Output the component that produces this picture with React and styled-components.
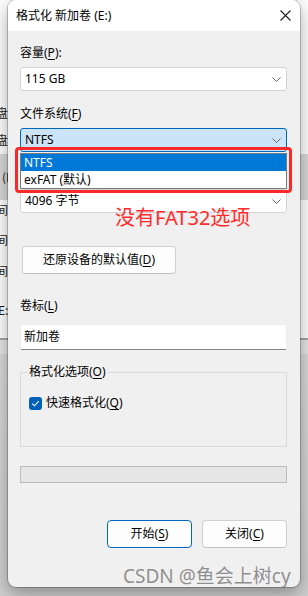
import React from "react";
import styled, { createGlobalStyle } from "styled-components";

const Global = createGlobalStyle`
  * { box-sizing: border-box; }
  html, body { margin: 0; padding: 0; width: 308px; height: 596px; overflow: hidden; background: #ffffff; }
  body { font-family: "Noto Sans", "Noto Sans CJK SC", sans-serif; font-size: 12px; color: #000; }
`;

const FONT = `"Noto Sans", "Noto Sans CJK SC", sans-serif`;

const Desktop = styled.div`
  position: relative;
  width: 308px;
  height: 596px;
  overflow: hidden;
  background: #ffffff;
`;

/* ---------- window behind the dialog ---------- */
const BackWindow = styled.div`
  position: absolute;
  inset: 0;
  display: flex;
  flex-direction: column;
  font-family: "Noto Sans CJK SC", sans-serif;
  font-size: 12px;
  color: #1a1a1a;
`;

const BackRow = styled.div`
  height: ${(p) => p.$h}px;
  flex: none;
  display: flex;
  align-items: center;
  background: ${(p) => p.$bg || "#ffffff"};
  border-top: ${(p) => (p.$line ? `2px solid ${p.$line}` : "none")};
`;

const BackText = styled.span`
  margin-left: ${(p) => p.$offset}px;
  white-space: nowrap;
  line-height: 14px;
`;

const BackFill = styled.div`
  flex: 1;
  background: linear-gradient(#d9d9d9, #cfcfcf);
`;

/* ---------- dialog ---------- */
const Dialog = styled.div`
  position: absolute;
  left: 8px;
  top: 0;
  width: 292px;
  height: 587px;
  background: #f0f0f0;
  border-radius: 8px;
  box-shadow: 0 0 0 1px rgba(0, 0, 0, 0.22), 0 6px 18px rgba(0, 0, 0, 0.35);
  display: flex;
  flex-direction: column;
  overflow: hidden;
  font-family: ${FONT};
`;

const TitleBar = styled.div`
  height: 31px;
  flex: none;
  background: #ffffff;
  display: flex;
  align-items: center;
  justify-content: space-between;
  padding-left: 8px;
`;

const Title = styled.span`
  font-size: 12px;
  line-height: 16px;
  color: #000;
`;

const CloseButton = styled.div`
  width: 30px;
  height: 31px;
  display: flex;
  align-items: center;
  justify-content: center;
`;

const Body = styled.div`
  display: flex;
  flex-direction: column;
  padding: 14px 13px 0 12px;
`;

const Label = styled.div`
  font-size: 12px;
  line-height: 16px;
  height: 16px;
  margin-top: ${(p) => p.$mt || 0}px;
  margin-bottom: ${(p) => (p.$mb == null ? 6 : p.$mb)}px;
  white-space: nowrap;
`;

const U = styled.span`
  text-decoration: underline;
  text-underline-offset: 2px;
`;

const Combo = styled.div`
  height: 24px;
  background: ${(p) => (p.$active ? "#cce4f7" : "#ffffff")};
  border: 1px solid ${(p) => (p.$active ? "#0067c0" : "#d3d3d3")};
  border-radius: 3px;
  display: flex;
  align-items: center;
  justify-content: space-between;
  padding: 0 5px 0 4px;
  font-size: 12px;
  line-height: 16px;
`;

const Chevron = () => (
  <svg width="9" height="5" viewBox="0 0 9 5">
    <polyline points="0.5,0.5 4.5,4.5 8.5,0.5" fill="none" stroke="#666" strokeWidth="1" />
  </svg>
);

const Button = styled.div`
  width: ${(p) => p.$w}px;
  height: 28px;
  flex: none;
  margin-left: ${(p) => p.$ml || 0}px;
  margin-top: ${(p) => p.$mt || 0}px;
  background: #fdfdfd;
  border: 1px solid ${(p) => (p.$primary ? "#0067c0" : "#d0d0d0")};
  border-bottom-color: ${(p) => (p.$primary ? "#0067c0" : "#c2c2c2")};
  border-radius: 4px;
  display: flex;
  align-items: center;
  justify-content: center;
  font-size: 12px;
  line-height: 16px;
  white-space: nowrap;
`;

const TextBox = styled.div`
  height: 26px;
  background: #ffffff;
  border: 1px solid #ececec;
  border-bottom: 1px solid #858585;
  border-radius: 2px;
  display: flex;
  align-items: center;
  padding-left: 3px;
  font-size: 12px;
  line-height: 16px;
`;

const Group = styled.fieldset`
  margin: 14px 0 0 0;
  padding: 15px 8px 35px 8px;
  border: 1px solid #dadada;
  min-width: 0;
`;

const Legend = styled.legend`
  margin-left: -2px;
  padding: 0 2px;
  font-size: 12px;
  line-height: 16px;
`;

const CheckRow = styled.div`
  display: flex;
  align-items: center;
  gap: 4px;
  height: 16px;
  font-size: 12px;
  line-height: 16px;
`;

const CheckBox = styled.div`
  width: 13px;
  height: 13px;
  border-radius: 3px;
  background: #005fb8;
  display: flex;
  align-items: center;
  justify-content: center;
`;

const Progress = styled.div`
  margin-top: 19px;
  height: 17px;
  background: #e6e6e6;
  border: 1px solid #bcbcbc;
`;

const ButtonRow = styled.div`
  margin-top: 37px;
  display: flex;
  justify-content: flex-end;
  gap: 10px;
`;

/* ---------- overlays ---------- */
const DropList = styled.div`
  position: absolute;
  left: 12px;
  top: 153px;
  width: 267px;
  background: #ffffff;
  border: 1px solid #7a7a7a;
  display: flex;
  flex-direction: column;
`;

const DropItem = styled.div`
  height: 17px;
  display: flex;
  align-items: center;
  padding-left: 3px;
  font-size: 12px;
  line-height: 16px;
  background: ${(p) => (p.$selected ? "#0078d7" : "#ffffff")};
  color: ${(p) => (p.$selected ? "#ffffff" : "#000000")};
`;

const RedBox = styled.div`
  position: absolute;
  left: 7px;
  top: 147px;
  width: 277px;
  height: 46px;
  border: 3px solid #fb2a2a;
  border-radius: 4px;
`;

const RedNote = styled.div`
  position: absolute;
  left: 107px;
  top: 206px;
  font-family: "Noto Sans", "Noto Sans CJK SC", sans-serif;
  font-size: 20px;
  line-height: 24px;
  color: #ff2b2b;
  white-space: nowrap;
`;

const Watermark = styled.div`
  position: absolute;
  left: 123px;
  top: 564px;
  font-family: "Noto Sans", "Noto Sans CJK SC", sans-serif;
  font-size: 19px;
  line-height: 24px;
  color: rgba(125, 125, 125, 0.85);
  white-space: nowrap;
`;

const backRows = [
  { h: 100 },
  { h: 26, text: "磁盘", offset: -16 },
  { h: 28, text: "磁盘", offset: -16 },
  { h: 46, text: "(E:)", offset: 2, bg: "#d9d9d9" },
  { h: 20, text: "时间", offset: -16 },
  { h: 40, text: "时间", offset: -16 },
  { h: 22, text: "时间", offset: -16 },
  { h: 56, text: "E:", offset: -2 },
  { h: 16, line: "#a3a3a3", bg: "#e6e6e6" },
];

export default function App() {
  return (
    <>
      <Global />
      <Desktop>
        <BackWindow>
          {backRows.map((r, i) => (
            <BackRow key={i} $h={r.h} $bg={r.bg} $line={r.line}>
              {r.text && <BackText $offset={r.offset}>{r.text}</BackText>}
            </BackRow>
          ))}
          <BackFill />
        </BackWindow>

        <Dialog>
          <TitleBar>
            <Title>格式化 新加卷 (E:)</Title>
            <CloseButton>
              <svg width="11" height="11" viewBox="0 0 11 11">
                <path d="M0.5 0.5 L10.5 10.5 M10.5 0.5 L0.5 10.5" stroke="#1b1b1b" strokeWidth="1.1" fill="none" />
              </svg>
            </CloseButton>
          </TitleBar>

          <Body>
            <Label>容量(<U>P</U>):</Label>
            <Combo>
              <span>115 GB</span>
              <Chevron />
            </Combo>

            <Label $mt={15}>文件系统(<U>F</U>)</Label>
            <Combo $active>
              <span>NTFS</span>
              <Chevron />
            </Combo>

            <Label $mt={15}>分配单元大小(<U>A</U>)</Label>
            <Combo>
              <span>4096 字节</span>
              <Chevron />
            </Combo>

            <Button $w={154} $ml={2} $mt={33}>
              还原设备的默认值(<U>D</U>)
            </Button>

            <Label $mt={24} $mb={10}>卷标(<U>L</U>)</Label>
            <TextBox>新加卷</TextBox>

            <Group>
              <Legend>格式化选项(<U>O</U>)</Legend>
              <CheckRow>
                <CheckBox>
                  <svg width="9" height="9" viewBox="0 0 9 9">
                    <polyline points="1.2,4.6 3.4,6.8 7.8,2.2" fill="none" stroke="#ffffff" strokeWidth="1.1" />
                  </svg>
                </CheckBox>
                <span>快速格式化(<U>Q</U>)</span>
              </CheckRow>
            </Group>

            <Progress />

            <ButtonRow>
              <Button $w={85} $primary>开始(<U>S</U>)</Button>
              <Button $w={85}>关闭(<U>C</U>)</Button>
            </ButtonRow>
          </Body>

          <DropList>
            <DropItem $selected>NTFS</DropItem>
            <DropItem>exFAT (默认)</DropItem>
          </DropList>
          <RedBox />
          <RedNote>没有FAT32选项</RedNote>
        </Dialog>

        <Watermark>CSDN @鱼会上树cy</Watermark>
      </Desktop>
    </>
  );
}
